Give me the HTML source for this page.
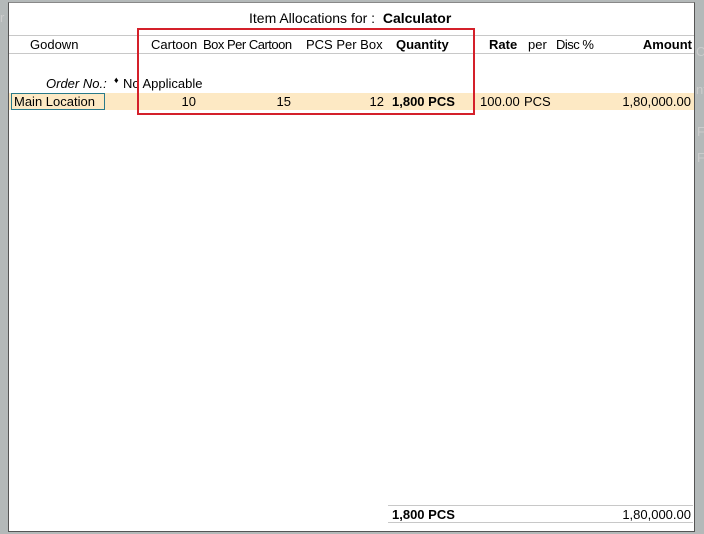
<!DOCTYPE html>
<html><head><style>
body{margin:0;width:704px;height:534px;background:#b4b9b9;position:relative;overflow:hidden;font-family:"Liberation Sans",Arial,sans-serif;font-size:13px;color:#000}
.p{position:absolute;left:8px;top:2px;width:685px;height:528px;background:#fff;border:1px solid #555;border-top-color:#888}
.t{position:absolute;white-space:nowrap}
.rt{position:absolute;white-space:nowrap;text-align:right}
.hl{position:absolute;height:1px;background:#c8c8c8}
.b{font-weight:bold}
</style></head><body>
<div class="t" style="left:0;top:10px;color:#ccc">r</div>
<div class="t" style="left:696px;top:44px;color:#ccc">Ce</div>
<div class="t" style="left:696px;top:82px;color:#ccc">nt</div>
<div class="t" style="left:697px;top:124px;color:#ccc">F</div>
<div class="t" style="left:697px;top:150px;color:#ccc">F</div>
<div class="p"></div>
<div class="t" style="left:249px;top:10px;font-size:14px">Item Allocations for :&nbsp; <span class="b">Calculator</span></div>
<div class="hl" style="left:9px;top:35px;width:685px"></div>
<div class="hl" style="left:9px;top:53px;width:685px"></div>
<div class="t" style="left:30px;top:37px">Godown</div>
<div class="t" style="left:151px;top:37px">Cartoon</div>
<div class="t" style="left:203px;top:37px;letter-spacing:-0.5px">Box Per Cartoon</div>
<div class="t" style="left:306px;top:37px">PCS Per Box</div>
<div class="t b" style="left:396px;top:37px">Quantity</div>
<div class="t b" style="left:489px;top:37px">Rate</div>
<div class="t" style="left:528px;top:37px">per</div>
<div class="t" style="left:556px;top:37px;letter-spacing:-0.5px">Disc %</div>
<div class="rt b" style="right:12px;top:37px">Amount</div>
<div class="t" style="left:46px;top:76px;font-style:italic">Order No.:</div>
<div class="t" style="left:114px;top:75px;font-size:9px">&#9830;</div>
<div class="t" style="left:123px;top:76px">No Applicable</div>
<div style="position:absolute;left:9px;top:93px;width:685px;height:17px;background:#fde9c4"></div>
<div style="position:absolute;left:11px;top:93px;width:92px;height:15px;border:1px solid #2a7a8a"></div>
<div class="t" style="left:14px;top:94px">Main Location</div>
<div class="rt" style="right:508px;top:94px">10</div>
<div class="rt" style="right:413px;top:94px">15</div>
<div class="rt" style="right:320px;top:94px">12</div>
<div class="t b" style="left:392px;top:94px">1,800 PCS</div>
<div class="t" style="left:480px;top:94px">100.00</div>
<div class="t" style="left:524px;top:94px">PCS</div>
<div class="rt" style="right:13px;top:94px">1,80,000.00</div>
<div style="position:absolute;left:137px;top:28px;width:334px;height:83px;border:2px solid #d4202a"></div>
<div class="hl" style="left:388px;top:505px;width:305px"></div>
<div class="hl" style="left:388px;top:522px;width:305px"></div>
<div class="t b" style="left:392px;top:507px">1,800 PCS</div>
<div class="rt" style="right:13px;top:507px">1,80,000.00</div>
</body></html>
